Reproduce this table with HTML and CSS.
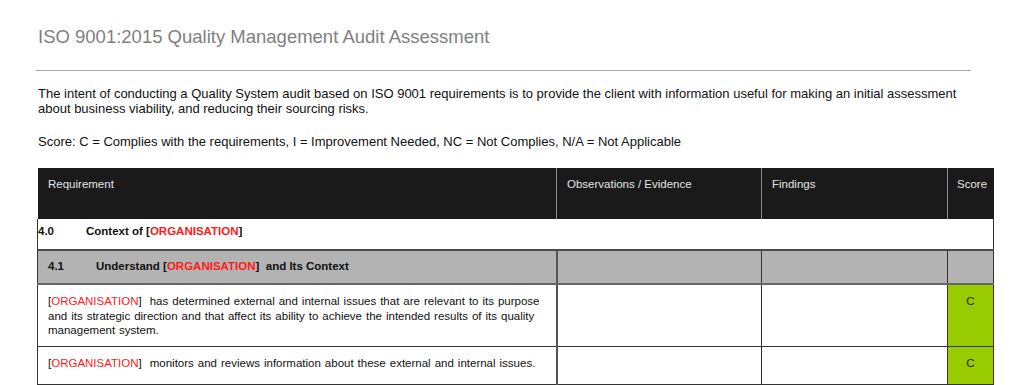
FILE: index.html
```html
<!DOCTYPE html>
<html lang="en">
<head>
<meta charset="utf-8">
<title>ISO 9001:2015 Quality Management Audit Assessment</title>
<link rel="stylesheet" href="styles.css">
</head>
<body>
<div class="page">
  <h1 class="title">ISO 9001:2015 Quality Management Audit Assessment</h1>
  <div class="rule"></div>
  <p class="intro">The intent of conducting a Quality System audit based on ISO 9001 requirements is to provide the client with information useful for making an initial assessment about business viability, and reducing their sourcing risks.</p>
  <p class="score-key">Score: C = Complies with the requirements, I = Improvement Needed, NC = Not Complies, N/A = Not Applicable</p>
  <table class="audit">
    <colgroup>
      <col class="c-req">
      <col class="c-obs">
      <col class="c-find">
      <col class="c-score">
    </colgroup>
    <thead>
      <tr class="head">
        <th>Requirement</th>
        <th>Observations / Evidence</th>
        <th>Findings</th>
        <th class="score-h">Score</th>
      </tr>
    </thead>
    <tbody>
      <tr class="section">
        <td colspan="4"><span class="num">4.0</span>Context of [<span class="org">ORGANISATION</span>]</td>
      </tr>
      <tr class="subsection">
        <td><span class="num">4.1</span>Understand [<span class="org">ORGANISATION</span>]&nbsp; and Its Context</td>
        <td></td>
        <td></td>
        <td></td>
      </tr>
      <tr class="item item-tall">
        <td>[<span class="org">ORGANISATION</span>]&nbsp; has determined external and internal issues that are relevant to its purpose<br>and its strategic direction and that affect its ability to achieve the intended results of its quality<br>management system.</td>
        <td></td>
        <td></td>
        <td class="score">C</td>
      </tr>
      <tr class="item item-short">
        <td>[<span class="org">ORGANISATION</span>]&nbsp; monitors and reviews information about these external and internal issues.</td>
        <td></td>
        <td></td>
        <td class="score">C</td>
      </tr>
    </tbody>
  </table>
</div>
</body>
</html>
```
FILE: styles.css
```css
html, body {
  margin: 0;
  padding: 0;
  background: #ffffff;
}

body {
  font-family: "Liberation Sans", Arial, sans-serif;
  color: #111111;
}

.page {
  padding: 27px 0 0 36px;
}

.title {
  margin: 0 0 0 2px;
  font-size: 18.5px;
  line-height: 20px;
  font-weight: normal;
  color: #7f7f7f;
}

.rule {
  width: 935px;
  height: 1px;
  background: #a6a6a6;
  margin-top: 23px;
}

.intro {
  margin: 15px 0 0 2px;
  width: 935px;
  font-size: 13px;
  line-height: 15px;
}

.score-key {
  margin: 18px 0 0 2px;
  font-size: 13px;
  line-height: 15px;
}

.audit {
  margin: 19px 0 0 1px;
  border-collapse: collapse;
  table-layout: fixed;
  width: 956px;
  font-size: 11.5px;
}

.c-req { width: 519px; }
.c-obs { width: 205px; }
.c-find { width: 186px; }
.c-score { width: 46px; }

.audit td,
.audit th {
  padding: 0;
  vertical-align: top;
}

.head th {
  height: 51px;
  box-sizing: border-box;
  background: #1a1a1a;
  color: #e4e4e4;
  font-weight: normal;
  text-align: left;
  padding: 10px 0 0 10px;
  line-height: 13px;
  border-left: 1px solid #8a8a8a;
}

.head th:first-child {
  border-left: 1px solid #ffffff;
}

.head th.score-h {
  padding-left: 9px;
}

.section td {
  height: 31px;
  box-sizing: border-box;
  border-left: 1px solid #333333;
  border-right: 1px solid #333333;
  border-bottom: 2px solid #4a4a4a;
  font-weight: bold;
  line-height: 13px;
  padding: 6px 0 0 0;
  color: #111111;
}

.section .num {
  display: inline-block;
  width: 48px;
}

.subsection td {
  height: 34px;
  box-sizing: border-box;
  background: #b3b3b3;
  border-left: 1px solid #333333;
  border-right: 1px solid #333333;
  border-bottom: 2px solid #666666;
  font-weight: bold;
  line-height: 13px;
  padding: 9px 0 0 10px;
}

.subsection td:first-child {
  border-right: 2px solid #555555;
}

.subsection .num {
  display: inline-block;
  width: 48px;
}

.item td {
  box-sizing: border-box;
  border-left: 1px solid #333333;
  border-right: 1px solid #333333;
  border-bottom: 1px solid #333333;
  line-height: 14.5px;
  padding: 9px 0 0 10px;
  white-space: nowrap;
  word-spacing: 0.8px;
}

.item td:first-child {
  border-right: 2px solid #555555;
}

.item-tall td { height: 62px; }
.item-short td { height: 38px; }

.audit td.score {
  background: #99cc00;
  text-align: center;
  padding: 9px 0 0 0;
  color: #222222;
}

.org {
  color: #ff1a1a;
}
```
